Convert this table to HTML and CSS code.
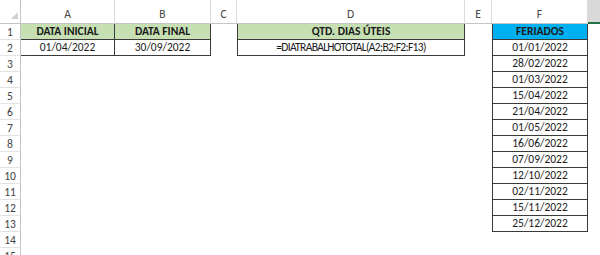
FILE: index.html
```html
<!DOCTYPE html>
<html>
<head>
<meta charset="utf-8">
<link rel="stylesheet" href="styles.css">
</head>
<body>
<div class="sheet">
  <div class="ch corner"><svg width="21" height="24" viewBox="0 0 21 24"><polygon points="18,12 18,19 11,19" fill="#d0d0d0"/></svg></div>
  <div class="ch">A</div><div class="ch">B</div><div class="ch">C</div><div class="ch">D</div><div class="ch">E</div><div class="ch">F</div><div class="ch sel"></div>

  <div class="rh">1</div><div class="c b green h">DATA INICIAL</div><div class="c b green h">DATA FINAL</div><div class="c"></div><div class="c b bl green h">QTD. DIAS ÚTEIS</div><div class="c"></div><div class="c b bl blue h">FERIADOS</div><div class="c"></div>
  <div class="rh">2</div><div class="c b">01/04/2022</div><div class="c b">30/09/2022</div><div class="c"></div><div class="c b bl f">=DIATRABALHOTOTAL(A2;B2;F2:F13)</div><div class="c"></div><div class="c b bl">01/01/2022</div><div class="c"></div>
  <div class="rh">3</div><div class="c"></div><div class="c"></div><div class="c"></div><div class="c"></div><div class="c"></div><div class="c b bl">28/02/2022</div><div class="c"></div>
  <div class="rh">4</div><div class="c"></div><div class="c"></div><div class="c"></div><div class="c"></div><div class="c"></div><div class="c b bl">01/03/2022</div><div class="c"></div>
  <div class="rh">5</div><div class="c"></div><div class="c"></div><div class="c"></div><div class="c"></div><div class="c"></div><div class="c b bl">15/04/2022</div><div class="c"></div>
  <div class="rh">6</div><div class="c"></div><div class="c"></div><div class="c"></div><div class="c"></div><div class="c"></div><div class="c b bl">21/04/2022</div><div class="c"></div>
  <div class="rh">7</div><div class="c"></div><div class="c"></div><div class="c"></div><div class="c"></div><div class="c"></div><div class="c b bl">01/05/2022</div><div class="c"></div>
  <div class="rh">8</div><div class="c"></div><div class="c"></div><div class="c"></div><div class="c"></div><div class="c"></div><div class="c b bl">16/06/2022</div><div class="c"></div>
  <div class="rh">9</div><div class="c"></div><div class="c"></div><div class="c"></div><div class="c"></div><div class="c"></div><div class="c b bl">07/09/2022</div><div class="c"></div>
  <div class="rh">10</div><div class="c"></div><div class="c"></div><div class="c"></div><div class="c"></div><div class="c"></div><div class="c b bl">12/10/2022</div><div class="c"></div>
  <div class="rh">11</div><div class="c"></div><div class="c"></div><div class="c"></div><div class="c"></div><div class="c"></div><div class="c b bl">02/11/2022</div><div class="c"></div>
  <div class="rh">12</div><div class="c"></div><div class="c"></div><div class="c"></div><div class="c"></div><div class="c"></div><div class="c b bl">15/11/2022</div><div class="c"></div>
  <div class="rh">13</div><div class="c"></div><div class="c"></div><div class="c"></div><div class="c"></div><div class="c"></div><div class="c b bl">25/12/2022</div><div class="c"></div>
  <div class="rh">14</div><div class="c"></div><div class="c"></div><div class="c"></div><div class="c"></div><div class="c"></div><div class="c"></div><div class="c"></div>
  <div class="rh">15</div><div class="c"></div><div class="c"></div><div class="c"></div><div class="c"></div><div class="c"></div><div class="c"></div><div class="c"></div>
</div>
</body>
</html>
```

FILE: styles.css
```css
html, body {
  margin: 0;
  padding: 0;
  background: #ffffff;
}
body {
  width: 600px;
  height: 255px;
  overflow: hidden;
  font-family: Carlito, Lato, "Liberation Sans", sans-serif;
}
.sheet {
  display: grid;
  grid-template-columns: 21px 94px 96px 26px 228px 27px 96px 13px;
  grid-template-rows: 24px repeat(15, 16px);
}
.ch {
  box-sizing: border-box;
  border-bottom: 1px solid #c4c4c4;
  border-right: 1px solid #dadada;
  background: #ffffff;
  color: #444444;
  font-size: 11.5px;
  text-align: center;
  padding-top: 6px;
  line-height: 17px;
}
.corner {
  border-right: 1px solid #c4c4c4;
  padding-top: 0;
}
.corner svg {
  display: block;
}
.sel {
  background: #d9d9d9;
  border-bottom: 2px solid #217346;
  border-right: none;
}
.rh {
  box-sizing: border-box;
  border-right: 1px solid #c4c4c4;
  border-bottom: 1px solid #e3e3e3;
  color: #444444;
  font-size: 11.5px;
  text-align: center;
  line-height: 16px;
}
.c {
  box-sizing: border-box;
  font-size: 11.5px;
  color: #1a1a1a;
  text-align: center;
  line-height: 15px;
  white-space: nowrap;
  overflow: hidden;
}
.f {
  letter-spacing: -0.65px;
}
.b {
  border-right: 1px solid #3a3a3a;
  border-bottom: 1px solid #3a3a3a;
}
.bl {
  border-left: 1px solid #3a3a3a;
}
.h {
  font-weight: bold;
}
.green {
  background: #c6e0b4;
}
.blue {
  background: #00b0f0;
}
```
